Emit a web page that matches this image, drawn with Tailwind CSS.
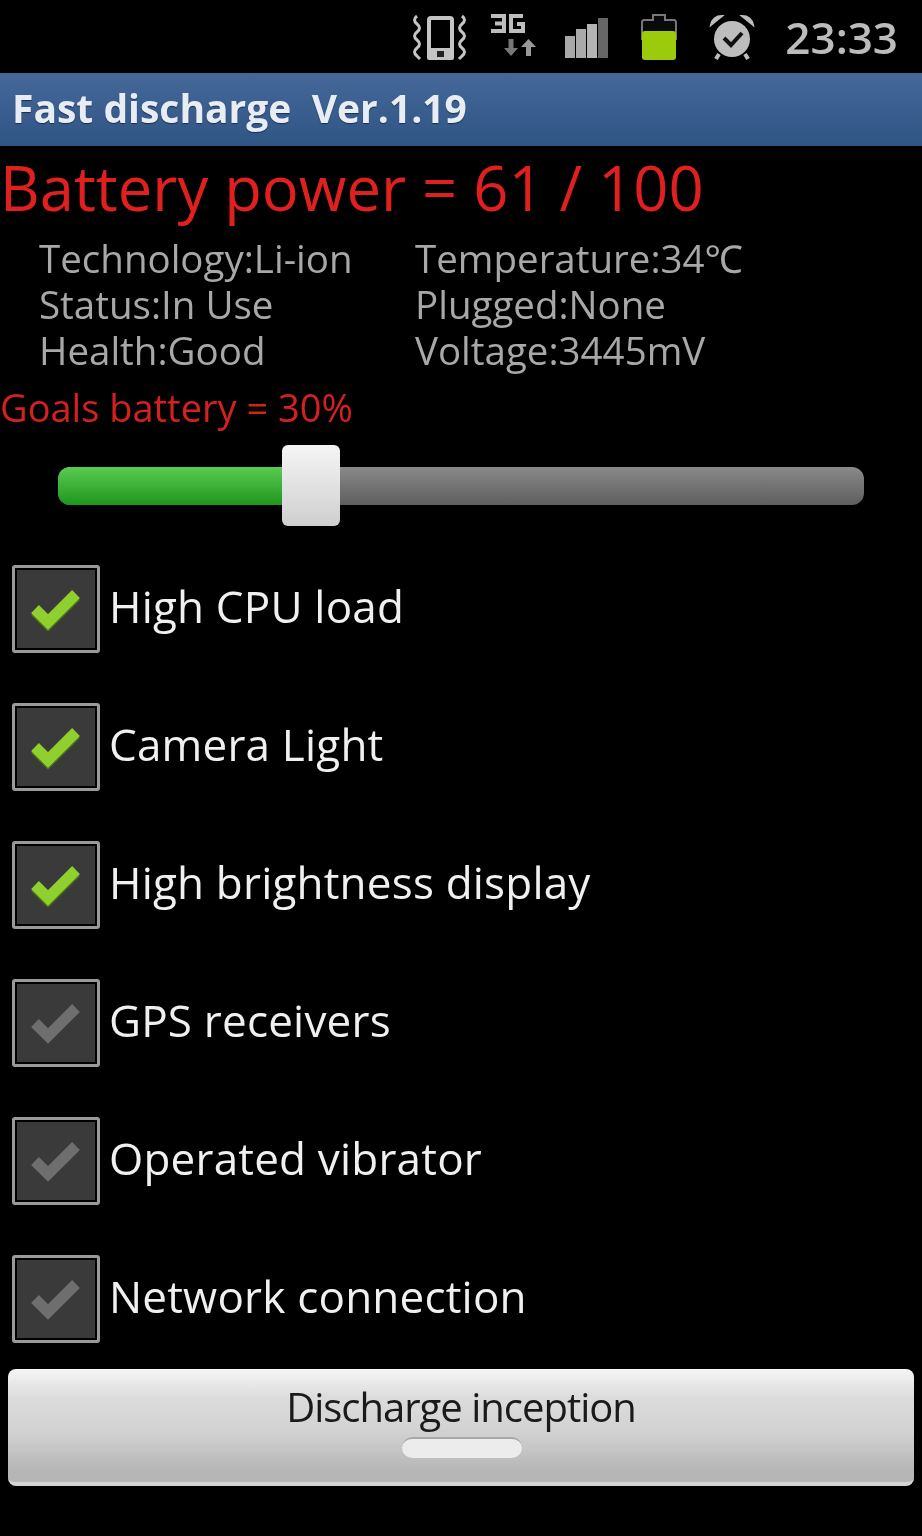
<!DOCTYPE html>
<html>
<head>
<meta charset="utf-8">
<script src="https://cdn.jsdelivr.net/npm/@tailwindcss/browser@4"></script>
<title>Fast discharge</title>
</head>
<body class="bg-black">
<div class="w-[922px] h-[1536px] bg-black overflow-hidden font-['Open_Sans','Noto_Sans',sans-serif] blur-[0.5px]">

  <!-- status bar -->
  <div class="h-[73px] flex items-center justify-end text-[#bdbdbd]">
    <svg class="w-[60px] h-[48px] mr-[21px]" viewBox="0 0 60 48" fill="none">
      <rect x="20" y="5" width="23" height="36" rx="2" stroke="#c4c4c4" stroke-width="4"/>
      <rect x="18" y="35" width="27" height="12" rx="2" fill="#c4c4c4"/>
      <rect x="28" y="38" width="7" height="6" fill="#222"/>
      <path d="M8 3 Q3 7 8 11 Q13 15 8 19 Q3 23 8 27 Q13 31 8 35 Q3 39 8 43 L11 46" stroke="#c4c4c4" stroke-width="3"/>
      <path d="M53 3 Q58 7 53 11 Q48 15 53 19 Q58 23 53 27 Q48 31 53 35 Q58 39 53 43 L50 46" stroke="#c4c4c4" stroke-width="3"/>
    </svg>
    <svg class="w-[48px] h-[46px] mr-[27px]" viewBox="0 0 48 46" fill="none">
      <path d="M1 2 H14 V17 H1 M5 9.500 H14" stroke="#bdbdbd" stroke-width="4"/>
      <path d="M33 2 H21 V17 H33 V10 H27" stroke="#bdbdbd" stroke-width="4"/>
      <path d="M18.500 25 H23.500 V34 H28 L21 42 L14 34 H18.500 Z" fill="#777"/>
      <path d="M36 42 H41 V33 H46 L38.500 25 L31 33 H36 Z" fill="#999"/>
    </svg>
    <div class="flex items-end gap-[1px] h-[42px] mr-[33px]">
      <div class="w-[10px] h-[22px] bg-[#a8a8a8]"></div>
      <div class="w-[10px] h-[29px] bg-[#aaaaaa]"></div>
      <div class="w-[10px] h-[34px] bg-[#b4b4b4]"></div>
      <div class="w-[10px] h-[40px] bg-[#666666]"></div>
    </div>
    <svg class="w-[36px] h-[48px] mr-[32px]" viewBox="0 0 36 48" fill="none">
      <path d="M12 2 H24 V7 H33 Q35 7 35 10 V26 H1 V10 Q1 7 3 7 H12 Z" stroke="#777" stroke-width="2" fill="#0a0a0a"/>
      <rect x="1" y="18" width="34" height="29" rx="3" fill="#9ccb0c"/>
    </svg>
    <svg class="w-[46px] h-[48px] mr-[30px]" viewBox="0 0 46 48" fill="none">
      <circle cx="23" cy="26" r="18" fill="#bdbdbd"/>
      <path d="M2 12 Q4 3 13 3 Z M44 12 Q42 3 33 3 Z" fill="#bdbdbd" stroke="#bdbdbd" stroke-width="2"/>
      <path d="M10 41 L7 46 M36 41 L39 46" stroke="#bdbdbd" stroke-width="4"/>
      <path d="M15 25 L22 32 L33 20" stroke="#111" stroke-width="4"/>
    </svg>
    <span class="mr-[24px] text-[44px] leading-none font-semibold text-[#bcbcbc]">23:33</span>
  </div>

  <!-- title bar -->
  <div class="h-[73px] flex items-center pl-[12px] pb-[4px] bg-gradient-to-b from-[#456899] to-[#2f5585]">
    <span class="text-[39px] leading-none font-bold text-[#e8edf3] whitespace-pre [text-shadow:0_1px_1px_#1c2f4d]">Fast discharge  Ver.1.19</span>
  </div>

  <!-- battery info -->
  <div class="h-[90px] flex items-center pb-[6px]">
    <span class="text-[61.500px] leading-none text-[#e01f1f] whitespace-pre">Battery power = 61 / 100</span>
  </div>
  <div class="grid grid-cols-[376px_1fr] pl-[39px] text-[38.500px] leading-[46px] text-[#a8a8a8] -mt-[1px]">
    <div>Technology:Li-ion</div><div>Temperature:34℃</div>
    <div>Status:In Use</div><div>Plugged:None</div>
    <div>Health:Good</div><div>Voltage:3445mV</div>
  </div>
  <div class="text-[38px] leading-[46px] text-[#d42020] mt-[11px]">Goals battery = 30%</div>

  <!-- slider -->
  <div class="relative h-[38px] mx-[58px] w-[806px] mt-[37px] rounded-[12px] bg-gradient-to-b from-[#8a8a8a] to-[#5e5e5e]">
    <div class="h-full w-[230px] rounded-l-[12px] bg-gradient-to-b from-[#58cc50] to-[#1c961c]"></div>
    <div class="absolute left-[224px] top-[-22px] w-[58px] h-[81px] rounded-[6px] bg-gradient-to-b from-[#f5f5f5] to-[#cfcfcf]"></div>
  </div>

  <!-- options -->
  <div class="mt-[60px] pl-[12px] flex flex-col gap-[50px]">
    <div class="flex items-center h-[88px] gap-[9px]">
      <div class="w-[88px] h-[88px] rounded-[3px] border-[3px] border-[#9a9a9a] p-[2px] bg-black"><div class="w-full h-full bg-[#3a3a3a] flex items-center justify-center">
        <svg class="w-[52px] h-[44px]" viewBox="0 0 52 44" fill="none"><path d="M5 24 L18 37 L46 9" stroke="#4a7a14" stroke-width="11"/><path d="M5 22 L18 35 L46 7" stroke="#8fd02f" stroke-width="11"/></svg>
      </div></div>
      <span class="text-[44px] pb-[6px] leading-none tracking-[0.2px] text-[#f0f0f0]">High CPU load</span>
    </div>
    <div class="flex items-center h-[88px] gap-[9px]">
      <div class="w-[88px] h-[88px] rounded-[3px] border-[3px] border-[#9a9a9a] p-[2px] bg-black"><div class="w-full h-full bg-[#3a3a3a] flex items-center justify-center">
        <svg class="w-[52px] h-[44px]" viewBox="0 0 52 44" fill="none"><path d="M5 24 L18 37 L46 9" stroke="#4a7a14" stroke-width="11"/><path d="M5 22 L18 35 L46 7" stroke="#8fd02f" stroke-width="11"/></svg>
      </div></div>
      <span class="text-[44px] pb-[6px] leading-none tracking-[0.2px] text-[#f0f0f0]">Camera Light</span>
    </div>
    <div class="flex items-center h-[88px] gap-[9px]">
      <div class="w-[88px] h-[88px] rounded-[3px] border-[3px] border-[#9a9a9a] p-[2px] bg-black"><div class="w-full h-full bg-[#3a3a3a] flex items-center justify-center">
        <svg class="w-[52px] h-[44px]" viewBox="0 0 52 44" fill="none"><path d="M5 24 L18 37 L46 9" stroke="#4a7a14" stroke-width="11"/><path d="M5 22 L18 35 L46 7" stroke="#8fd02f" stroke-width="11"/></svg>
      </div></div>
      <span class="text-[44px] pb-[6px] leading-none tracking-[0.2px] text-[#f0f0f0]">High brightness display</span>
    </div>
    <div class="flex items-center h-[88px] gap-[9px]">
      <div class="w-[88px] h-[88px] rounded-[3px] border-[3px] border-[#9a9a9a] p-[2px] bg-black"><div class="w-full h-full bg-[#3a3a3a] flex items-center justify-center">
        <svg class="w-[52px] h-[44px]" viewBox="0 0 52 44" fill="none"><path d="M5 22 L18 35 L46 7" stroke="#6e6e6e" stroke-width="11"/></svg>
      </div></div>
      <span class="text-[44px] pb-[6px] leading-none tracking-[0.2px] text-[#f0f0f0]">GPS receivers</span>
    </div>
    <div class="flex items-center h-[88px] gap-[9px]">
      <div class="w-[88px] h-[88px] rounded-[3px] border-[3px] border-[#9a9a9a] p-[2px] bg-black"><div class="w-full h-full bg-[#3a3a3a] flex items-center justify-center">
        <svg class="w-[52px] h-[44px]" viewBox="0 0 52 44" fill="none"><path d="M5 22 L18 35 L46 7" stroke="#6e6e6e" stroke-width="11"/></svg>
      </div></div>
      <span class="text-[44px] pb-[6px] leading-none tracking-[0.2px] text-[#f0f0f0]">Operated vibrator</span>
    </div>
    <div class="flex items-center h-[88px] gap-[9px]">
      <div class="w-[88px] h-[88px] rounded-[3px] border-[3px] border-[#9a9a9a] p-[2px] bg-black"><div class="w-full h-full bg-[#3a3a3a] flex items-center justify-center">
        <svg class="w-[52px] h-[44px]" viewBox="0 0 52 44" fill="none"><path d="M5 22 L18 35 L46 7" stroke="#6e6e6e" stroke-width="11"/></svg>
      </div></div>
      <span class="text-[44px] pb-[6px] leading-none tracking-[0.2px] text-[#f0f0f0]">Network connection</span>
    </div>
  </div>

  <!-- start button -->
  <div class="mx-[8px] mt-[26px] h-[117px] w-[906px] rounded-[8px] border-b-[4px] border-[#d4d4d4] bg-[linear-gradient(#f5f5f5,#dcdcdc_25%,#d2d2d2_55%,#b6b6b6_90%)] flex flex-col items-center">
    <span class="mt-[13px] text-[40px] leading-[50px] text-[#1a1a1a] tracking-[-1px]">Discharge inception</span>
    <div class="mt-[5px] ml-[1px] w-[120px] h-[21px] rounded-full bg-[#ececec] border-t-2 border-[#a8a8a8]"></div>
  </div>
</div>
</body>
</html>
